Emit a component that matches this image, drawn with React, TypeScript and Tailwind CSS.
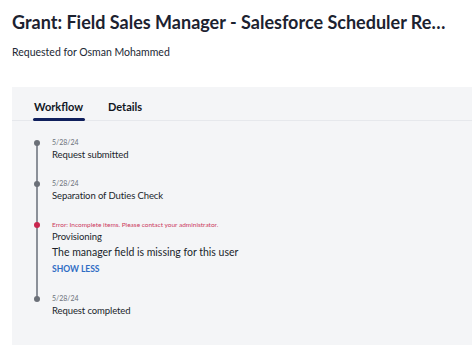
import React from "react";

type Step = {
  date?: string;
  error?: string;
  title: string;
  detail?: string;
  failed?: boolean;
};

const steps: Step[] = [
  { date: "5/28/24", title: "Request submitted" },
  { date: "5/28/24", title: "Separation of Duties Check" },
  {
    error: "Error: Incomplete items. Please contact your administrator.",
    title: "Provisioning",
    detail: "The manager field is missing for this user",
    failed: true,
  },
  { date: "5/28/24", title: "Request completed" },
];

function TimelineItem({ step, last }: { step: Step; last: boolean }) {
  return (
    <div className="relative flex">
      <div className="relative w-[40px] shrink-0">
        {!last && (
          <div className="absolute left-[24px] top-[5px] bottom-[-6px] w-[2px] bg-[#8b9099]" />
        )}
        <div
          className={`absolute left-[22px] top-[2.5px] w-[6px] h-[6px] rounded-full ${
            step.failed ? "bg-[#c9264f]" : "bg-[#6b7078]"
          }`}
        />
      </div>
      <div className={last ? "" : "pb-[17px]"}>
        {step.date && (
          <div className="text-[7px] leading-[11px] text-[#6c717a]">{step.date}</div>
        )}
        {step.error && (
          <div className="text-[6.5px] leading-[11px] text-[#cc3a5e]">{step.error}</div>
        )}
        <div className="text-[9.5px] leading-[13px] tracking-[-0.1px] text-[#1a1f2b]">{step.title}</div>
        {step.detail && (
          <>
            <div className="mt-[1px] text-[10.5px] leading-[16px] text-[#1a1f2b]">{step.detail}</div>
            <button className="block mt-[2px] text-[8.5px] leading-[14px] font-bold text-[#2f6cc4]">
              SHOW LESS
            </button>
          </>
        )}
      </div>
    </div>
  );
}

export default function App() {
  return (
    <div className="w-[474px] h-[347px] bg-white font-['Lato','Liberation_Sans',sans-serif] text-[#1a1f2b] overflow-hidden">
      <div className="px-[12px] pt-[8px]">
        <h1 className="text-[18px] leading-[28px] font-bold text-[#1c2230] truncate pr-[10px]">
          Grant: Field Sales Manager - Salesforce Scheduler Request
        </h1>
        <p className="mt-[8px] text-[10.5px] leading-[16px] text-[#222834]">
          Requested for Osman Mohammed
        </p>
      </div>
      <div className="mt-[27px] ml-[12px] mr-[2px] h-[258px] bg-[#f4f5f7]">
        <div className="flex gap-[25px] px-[22px] border-b border-[#e6e8ec]">
          <div className="relative pt-[14px] pb-[7px] text-[11px] leading-[12px] font-bold text-[#11161f]">
            Workflow
            <div className="absolute left-[-1px] right-[-2px] bottom-[-1px] h-[3px] rounded-full bg-[#0f1f5c]" />
          </div>
          <div className="pt-[14px] pb-[7px] text-[11px] leading-[12px] font-bold text-[#11161f]">
            Details
          </div>
        </div>
        <div className="pt-[16px]">
          {steps.map((s, i) => (
            <TimelineItem key={i} step={s} last={i === steps.length - 1} />
          ))}
        </div>
      </div>
    </div>
  );
}
